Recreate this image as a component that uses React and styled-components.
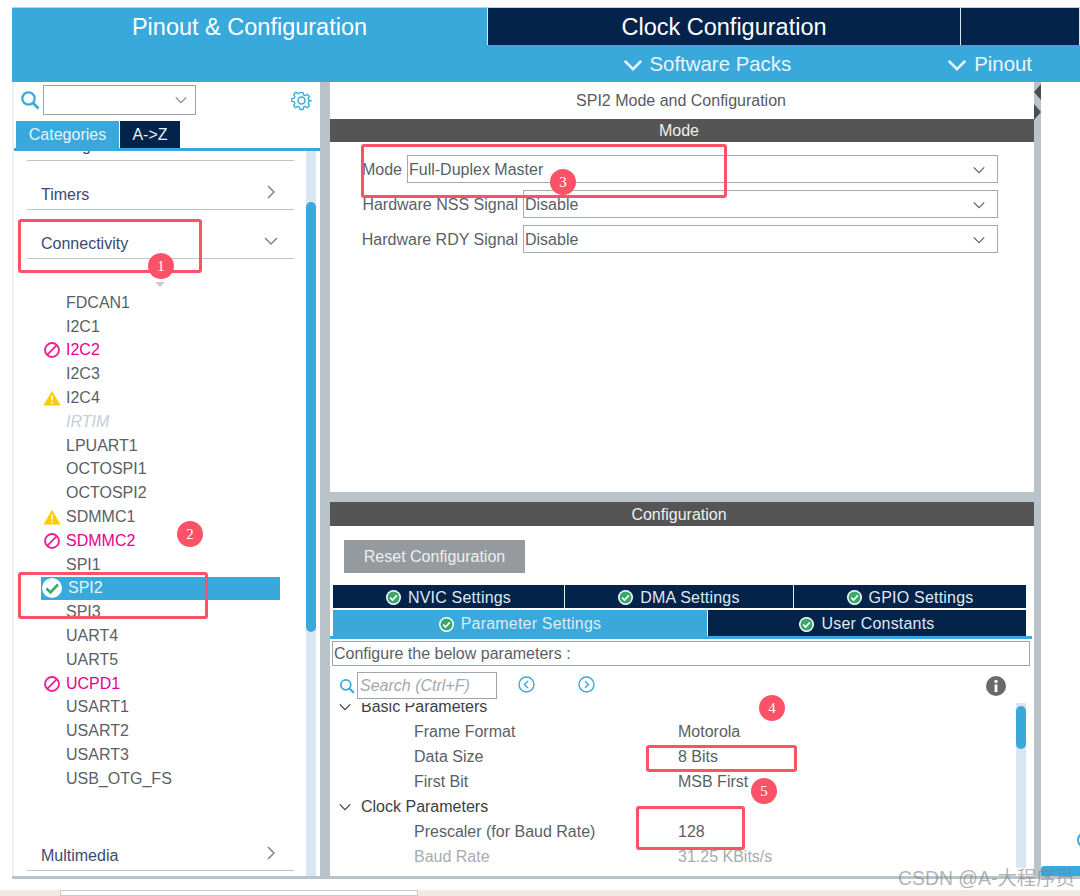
import React from "react";
import styled, { createGlobalStyle } from "styled-components";

const Global = createGlobalStyle`
  html, body { margin: 0; padding: 0; background: #fff; }
  body { font-family: "Liberation Sans", Arial, sans-serif; }
  * { box-sizing: border-box; }
`;

const Page = styled.div`
  position: relative;
  width: 1080px;
  height: 896px;
  overflow: hidden;
  background: #fff;
  display: flex;
  flex-direction: column;
  padding-top: 7px;
`;
const Shell = styled.div`
  margin-left: 12px;
  width: 1068px;
  height: 872px;
  flex: none;
  display: flex;
  flex-direction: column;
  border-bottom: 3px solid #b8c4ca;
`;
const TopTabs = styled.div`
  display: flex;
  height: 38px;
  flex: none;
  background: #03234b;
  border-top: 1px solid #a9d6ec;
`;
const TopTab = styled.div`
  width: ${(p) => p.$w}px;
  flex: none;
  display: flex;
  align-items: center;
  justify-content: center;
  padding-top: 1px;
  font-size: 23.5px;
  color: #fff;
  background: ${(p) => (p.$active ? "#39a9dc" : "#03234b")};
  border-right: 1px solid #d6e6ef;
`;
const SubBar = styled.div`
  height: 37px;
  flex: none;
  background: #39a9dc;
  display: flex;
  align-items: center;
  justify-content: flex-end;
  color: #e8f5fb;
  font-size: 20.4px;
  padding: 2px 48px 0 0;
  gap: 155px;
`;
const SubItem = styled.div`
  display: flex;
  align-items: center;
  gap: 6px;
`;
const Body = styled.div`
  flex: 1;
  min-height: 0;
  display: flex;
`;
const Side = styled.aside`
  width: 308px;
  flex: none;
  display: flex;
  flex-direction: column;
  padding-left: 2px;
  background: linear-gradient(90deg, #eef2f4 2px, #fff 2px);
`;
const SearchRow = styled.div`
  height: 39px;
  flex: none;
  display: flex;
  padding-top: 3px;
  align-items: flex-start;
`;
const SearchIcon = styled.div`
  width: 29px;
  height: 30px;
  flex: none;
  display: flex;
  align-items: center;
  justify-content: center;
  color: #39a9dc;
  padding-left: 2px;
`;
const Combo = styled.div`
  width: 153px;
  height: 30px;
  flex: none;
  border: 1px solid #9ba3a8;
  display: flex;
  align-items: center;
  justify-content: flex-end;
  padding-right: 7px;
  color: #7f8a90;
`;
const GearSlot = styled.div`
  margin-left: auto;
  width: 34px;
  height: 30px;
  flex: none;
  padding-right: 4px;
  display: flex;
  align-items: center;
  justify-content: center;
  color: #39a9dc;
`;
const SideTabs = styled.div`
  height: 27px;
  flex: none;
  display: flex;
  padding-left: 2px;
  gap: 1px;
`;
const SideTab = styled.div`
  width: ${(p) => p.$w}px;
  display: flex;
  align-items: center;
  justify-content: center;
  font-size: 16px;
  color: #e6f3fa;
  background: ${(p) => (p.$active ? "#39a9dc" : "#03234b")};
`;
const BlueRule = styled.div`
  height: 3px;
  flex: none;
  background: #39a9dc;
  margin-right: ${(p) => p.$mr || 0}px;
`;
const SideScroll = styled.div`
  flex: 1;
  min-height: 0;
  display: flex;
`;
const TreeView = styled.div`
  width: 292px;
  flex: none;
  overflow: hidden;
  padding: 0 12px 0 13px;
`;
const Track = styled.div`
  width: 10px;
  flex: none;
  background: #d9e7f4;
  display: flex;
  flex-direction: column;
`;
const Thumb = styled.div`
  flex: none;
  height: ${(p) => p.$h}px;
  margin-top: ${(p) => p.$top}px;
  background: #39a9dc;
  border-radius: 5px;
`;
const Category = styled.div`
  height: ${(p) => p.$h}px;
  margin-top: ${(p) => p.$mt || 0}px;
  border-bottom: 1px solid #bcc6d2;
  display: flex;
  align-items: flex-end;
  justify-content: space-between;
  padding: 0 15px 5px 14px;
  font-size: 16px;
  color: #3a4a72;
`;
const ChevronSlot = styled.div`
  color: #7f868b;
  display: flex;
  margin-bottom: 4px;
`;
const ScrollHint = styled.div`
  margin: 23px 0 0 128px;
  width: 0;
  height: 0;
  border-left: 5px solid transparent;
  border-right: 5px solid transparent;
  border-top: 5px solid #c9c9c9;
`;
const PeerList = styled.div`
  margin-top: 4px;
  display: flex;
  flex-direction: column;
  margin-left: 14px;
  width: 239px;
`;
const Peer = styled.div`
  height: 23.8px;
  flex: none;
  display: flex;
  align-items: center;
  font-size: 16px;
  color: ${(p) =>
    p.$selected ? "#e6f3fa" : p.$state === "off" ? "#e6008c" : p.$state === "dim" ? "#c6ced6" : "#5a5f66"};
  font-style: ${(p) => (p.$state === "dim" ? "italic" : "normal")};
  background: ${(p) => (p.$selected ? "#39a9dc" : "transparent")};
`;
const PeerIcon = styled.div`
  width: ${(p) => (p.$selected ? 27 : 25)}px;
  flex: none;
  display: flex;
  align-items: center;
  padding-left: ${(p) => (p.$selected ? 0 : 2)}px;
`;
const Gutter = styled.div`
  flex: none;
  width: ${(p) => p.$w}px;
  background: #b8c4ca;
  display: flex;
  flex-direction: column;
  align-items: center;
`;
const Center = styled.main`
  width: 704px;
  flex: none;
  display: flex;
  flex-direction: column;
`;
const ModePane = styled.section`
  height: 410px;
  flex: none;
  background: #fff;
`;
const PaneTitle = styled.div`
  height: 37px;
  display: flex;
  align-items: center;
  justify-content: center;
  font-size: 16px;
  color: #565c62;
  padding-right: 2px;
`;
const DarkBar = styled.div`
  height: ${(p) => p.$h}px;
  flex: none;
  background: #545554;
  color: #eef0ee;
  display: flex;
  align-items: center;
  justify-content: center;
  font-size: 16px;
  padding: 1px 6px 0 0;
`;
const ModeForm = styled.div`
  padding-top: 13px;
  display: flex;
  flex-direction: column;
  gap: 7px;
  width: 668px;
`;
const ModeRow = styled.div`
  display: flex;
  align-items: center;
  justify-content: flex-end;
  height: 28px;
  gap: 5px;
  font-size: 16px;
  color: #5a5f66;
`;
const ModeLabel = styled.div`
  white-space: nowrap;
  padding-top: 1px;
`;
const Select = styled.div`
  width: ${(p) => p.$w}px;
  height: 28px;
  flex: none;
  border: 1px solid #a4abaf;
  display: flex;
  align-items: center;
  justify-content: space-between;
  padding: 1px 11px 0 1px;
  color: #5a5f66;
`;
const SplitGap = styled.div`
  height: 10px;
  flex: none;
  background: #b8c4ca;
`;
const ConfigPane = styled.section`
  flex: 1;
  min-height: 0;
  display: flex;
  flex-direction: column;
  background: #fff;
  overflow: hidden;
`;
const ResetRow = styled.div`
  height: 59px;
  flex: none;
  padding: 14px 0 0 14px;
`;
const ResetButton = styled.div`
  width: 181px;
  height: 33px;
  background: #949a9e;
  color: #eef0f0;
  display: flex;
  align-items: center;
  justify-content: center;
  font-size: 16px;
`;
const TabRow = styled.div`
  display: flex;
  flex: none;
  height: ${(p) => p.$h}px;
  margin: 0 8px 0 3px;
  margin-top: ${(p) => p.$mt || 0}px;
`;
const ConfigTab = styled.div`
  flex: ${(p) => p.$w}px 0 0;
  display: flex;
  align-items: center;
  justify-content: center;
  gap: 7px;
  padding-top: 2px;
  font-size: 16px;
  letter-spacing: 0.2px;
  color: #dfeaf2;
  background: ${(p) => (p.$active ? "#39a9dc" : "#03234b")};
  border-right: ${(p) => (p.$last ? "none" : "1px solid #e3edf3")};
`;
const ConfigureBox = styled.div`
  margin: 2px 4px 0 2px;
  height: 25px;
  flex: none;
  border: 1px solid #9ea6ab;
  display: flex;
  align-items: center;
  padding: 1px 0 0 1px;
  font-size: 16px;
  color: #5a5f66;
`;
const ParamTools = styled.div`
  height: 37px;
  flex: none;
  margin-right: 4px;
  padding: 6px 24px 0 9px;
  display: flex;
  align-items: flex-start;
  color: #39a9dc;
`;
const ToolIcon = styled.div`
  display: flex;
  flex: none;
  margin-top: 6px;
`;
const ToolSearch = styled.div`
  width: 140px;
  height: 27px;
  margin-left: 2px;
  flex: none;
  border: 1px solid #9ea6ab;
  display: flex;
  align-items: center;
  padding: 1px 0 0 2px;
  font-size: 16px;
  font-style: italic;
  color: #a4a9ad;
`;
const NavDot = styled.div`
  flex: none;
  margin-left: ${(p) => p.$ml}px;
  margin-top: 4px;
  display: flex;
`;
const InfoDot = styled.div`
  flex: none;
  margin-left: auto;
  margin-top: 4px;
  display: flex;
  color: #6a6a6a;
`;
const ParamBody = styled.div`
  flex: 1;
  min-height: 0;
  display: flex;
  padding-left: 4px;
  padding-right: 8px;
`;
const ParamScroll = styled.div`
  flex: 1;
  min-width: 0;
  overflow: hidden;
`;
const ParamList = styled.div`
  margin-top: -9px;
  display: flex;
  flex-direction: column;
`;
const ParamRow = styled.div`
  height: 25px;
  flex: none;
  display: flex;
  align-items: center;
  font-size: 16px;
  color: ${(p) => (p.$dim ? "#a7acb0" : "#5a5f66")};
`;
const GroupRow = styled(ParamRow)`
  color: #3c4046;
  gap: 9px;
  padding-left: 4px;
`;
const ParamName = styled.div`
  width: 264px;
  margin-left: 80px;
  flex: none;
`;
const ParamTrack = styled(Track)`
  margin-bottom: 8px;
`;
const RightRail = styled.div`
  flex: 1;
  min-width: 0;
  background: #fff;
  display: flex;
  flex-direction: column;
  justify-content: flex-end;
`;
const BottomTab = styled.div`
  height: 10px;
  background: #39a9dc;
  border-top-left-radius: 3px;
  margin-top: auto;
`;
const Footer = styled.div`
  flex: 1;
  margin-top: 11px;
  background: #efe9e2;
  padding-left: 60px;
`;
const FooterBox = styled.div`
  width: 358px;
  height: 100%;
  background: #fff;
  border: 1px solid #c9c9c9;
`;
const RedBox = styled.div`
  position: absolute;
  left: ${(p) => p.$x}px;
  top: ${(p) => p.$y}px;
  width: ${(p) => p.$w}px;
  height: ${(p) => p.$h}px;
  border: 3px solid #fb5268;
  border-radius: 3px;
`;
const Badge = styled.div`
  position: absolute;
  left: ${(p) => p.$x - 13}px;
  top: ${(p) => p.$y - 13}px;
  width: 26px;
  height: 26px;
  border-radius: 50%;
  background: #fb5268;
  color: #fff;
  font-family: "Liberation Serif", serif;
  font-size: 15px;
  display: flex;
  align-items: center;
  justify-content: center;
`;
const Watermark = styled.div`
  position: absolute;
  left: 898px;
  top: 866px;
  font-family: "Liberation Sans", "Noto Sans CJK SC", sans-serif;
  font-size: 19.4px;
  line-height: 24px;
  white-space: nowrap;
  color: rgba(130, 130, 130, 0.62);
`;
const ArrowLeft = styled.div`
  margin-top: 2px;
  width: 0;
  height: 0;
  border-top: 8px solid transparent;
  border-bottom: 8px solid transparent;
  border-right: 7px solid #4c4c4c;
`;
const ArrowRight = styled.div`
  margin-top: 4px;
  width: 0;
  height: 0;
  border-top: 8px solid transparent;
  border-bottom: 8px solid transparent;
  border-left: 7px solid #4c4c4c;
`;
const EdgeDot = styled.div`
  position: absolute;
  left: 1077px;
  top: 832px;
  width: 16px;
  height: 16px;
  border-radius: 50%;
  border: 2px solid #39a9dc;
`;

const Chevron = ({ size = 16, dir = "down", w = 1.5 }) => (
  <svg width={size} height={size} viewBox="0 0 16 16" fill="none" stroke="currentColor" strokeWidth={w}>
    {dir === "down" ? <path d="M2 5l6 6 6-6" /> : <path d="M5 2l6 6-6 6" />}
  </svg>
);
const Search = ({ size = 20 }) => (
  <svg width={size} height={size} viewBox="0 0 20 20" fill="none" stroke="currentColor" strokeWidth="2.2">
    <circle cx="8.5" cy="8.5" r="6.2" />
    <path d="M13 13l5.5 5.5" strokeWidth="2.6" />
  </svg>
);
const Gear = () => (
  <svg width="21" height="21" viewBox="0 0 24 24" fill="none" stroke="currentColor" strokeWidth="1.7" strokeLinejoin="round">
    <path d="M10 2h4l.6 3 2.1.9 2.6-1.7 2.8 2.8-1.7 2.6.9 2.1 3 .6v0l-3 .6v0.8l-.9 2.1 1.7 2.6-2.8 2.8-2.6-1.7-2.1.9-.6 3h-4l-.6-3-2.1-.9-2.6 1.7-2.8-2.8 1.7-2.6-.9-2.1-3-.6v-3.4l3-.6.9-2.1-1.7-2.6 2.8-2.8 2.6 1.7 2.1-.9z" transform="translate(1.2 1.2) scale(0.9)" />
    <circle cx="12" cy="12" r="4" />
  </svg>
);
const Ban = () => (
  <svg width="18" height="18" viewBox="0 0 18 18" fill="none" stroke="#e8268f" strokeWidth="1.9">
    <circle cx="9" cy="9" r="7" />
    <path d="M4.2 13.8l9.6-9.6" />
  </svg>
);
const Warn = () => (
  <svg width="18" height="16" viewBox="0 0 18 16">
    <path d="M9 .8L17.6 15.4H.4z" fill="#fecb00" />
    <path d="M9 5.5v5M9 11.8v1.6" stroke="#fff" strokeWidth="1.6" />
  </svg>
);
const CheckBig = () => (
  <svg width="22" height="22" viewBox="0 0 22 22">
    <circle cx="11" cy="11" r="10" fill="#fff" />
    <path d="M5.5 11.5l4 4 7.5-8" fill="none" stroke="#3aa76d" strokeWidth="2.6" />
  </svg>
);
const CheckSmall = () => (
  <svg width="15" height="15" viewBox="0 0 15 15">
    <circle cx="7.5" cy="7.5" r="7.5" fill="#fff" />
    <circle cx="7.5" cy="7.5" r="6" fill="#3aa76d" />
    <path d="M4.2 7.6l2.4 2.4 4.2-4.6" fill="none" stroke="#fff" strokeWidth="1.7" />
  </svg>
);
const Nav = ({ right }) => (
  <svg width="17" height="17" viewBox="0 0 17 17" fill="none" stroke="#39a9dc">
    <circle cx="8.5" cy="8.5" r="7.5" strokeWidth="1.4" />
    <path d={right ? "M7 5l3.5 3.5L7 12" : "M10 5L6.5 8.5 10 12"} strokeWidth="1.4" />
  </svg>
);
const Info = () => (
  <svg width="20" height="20" viewBox="0 0 20 20">
    <circle cx="10" cy="10" r="10" fill="currentColor" />
    <rect x="8.6" y="8.5" width="2.8" height="7.5" fill="#fff" />
    <circle cx="10" cy="5.5" r="1.7" fill="#fff" />
  </svg>
);

const peers = [
  ["FDCAN1"], ["I2C1"], ["I2C2", "off"], ["I2C3"], ["I2C4", "warn"], ["IRTIM", "dim"],
  ["LPUART1"], ["OCTOSPI1"], ["OCTOSPI2"], ["SDMMC1", "warn"], ["SDMMC2", "off"], ["SPI1"],
  ["SPI2", "ok"], ["SPI3"], ["UART4"], ["UART5"], ["UCPD1", "off"], ["USART1"], ["USART2"],
  ["USART3"], ["USB_OTG_FS"],
];

const params = [
  ["Frame Format", "Motorola"],
  ["Data Size", "8 Bits"],
  ["First Bit", "MSB First"],
];

const redBoxes = [
  [18, 219, 184, 54],
  [18, 572, 190, 47],
  [361, 144, 366, 54],
  [646, 745, 151, 27],
  [636, 806, 109, 44],
];
const badges = [
  [161, 266, 1],
  [190, 534, 2],
  [563, 182, 3],
  [772, 708, 4],
  [764, 791, 5],
];

export default function App() {
  return (
    <Page>
      <Global />
      <Shell>
        <TopTabs>
          <TopTab $w={476} $active>Pinout &amp; Configuration</TopTab>
          <TopTab $w={473}>Clock Configuration</TopTab>
          <TopTab $w={119} />
        </TopTabs>
        <SubBar>
          <SubItem><Chevron size={22} w={2} />Software Packs</SubItem>
          <SubItem><Chevron size={22} w={2} />Pinout</SubItem>
        </SubBar>
        <Body>
          <Side>
            <SearchRow>
              <SearchIcon><Search /></SearchIcon>
              <Combo><Chevron size={14} /></Combo>
              <GearSlot><Gear /></GearSlot>
            </SearchRow>
            <SideTabs>
              <SideTab $w={103} $active>Categories</SideTab>
              <SideTab $w={60}>A-&gt;Z</SideTab>
            </SideTabs>
            <BlueRule />
            <SideScroll>
              <TreeView>
                <Category $h={10}>Analog</Category>
                <Category $h={49}>
                  Timers
                  <ChevronSlot><Chevron dir="right" /></ChevronSlot>
                </Category>
                <Category $h={49}>
                  Connectivity
                  <ChevronSlot><Chevron /></ChevronSlot>
                </Category>
                <ScrollHint />
                <PeerList>
                  {peers.map(([name, state]) => (
                    <Peer key={name} $state={state} $selected={state === "ok"}>
                      <PeerIcon $selected={state === "ok"}>
                        {state === "off" && <Ban />}
                        {state === "warn" && <Warn />}
                        {state === "ok" && <CheckBig />}
                      </PeerIcon>
                      {name}
                    </Peer>
                  ))}
                </PeerList>
                <Category $h={50} $mt={30}>
                  Multimedia
                  <ChevronSlot><Chevron dir="right" /></ChevronSlot>
                </Category>
              </TreeView>
              <Track><Thumb $top={51} $h={430} /></Track>
            </SideScroll>
          </Side>
          <Gutter $w={10} />
          <Center>
            <ModePane>
              <PaneTitle>SPI2 Mode and Configuration</PaneTitle>
              <DarkBar $h={23}>Mode</DarkBar>
              <ModeForm>
                <ModeRow>
                  <ModeLabel>Mode</ModeLabel>
                  <Select $w={591}>Full-Duplex Master<Chevron size={14} w={1.3} /></Select>
                </ModeRow>
                <ModeRow>
                  <ModeLabel>Hardware NSS Signal</ModeLabel>
                  <Select $w={475}>Disable<Chevron size={14} w={1.3} /></Select>
                </ModeRow>
                <ModeRow>
                  <ModeLabel>Hardware RDY Signal</ModeLabel>
                  <Select $w={475}>Disable<Chevron size={14} w={1.3} /></Select>
                </ModeRow>
              </ModeForm>
            </ModePane>
            <SplitGap />
            <ConfigPane>
              <DarkBar $h={24}>Configuration</DarkBar>
              <ResetRow><ResetButton>Reset Configuration</ResetButton></ResetRow>
              <TabRow $h={23}>
                <ConfigTab $w={232}><CheckSmall />NVIC Settings</ConfigTab>
                <ConfigTab $w={229}><CheckSmall />DMA Settings</ConfigTab>
                <ConfigTab $w={232} $last><CheckSmall />GPIO Settings</ConfigTab>
              </TabRow>
              <TabRow $h={26} $mt={2}>
                <ConfigTab $w={375} $active><CheckSmall />Parameter Settings</ConfigTab>
                <ConfigTab $w={318} $last><CheckSmall />User Constants</ConfigTab>
              </TabRow>
              <BlueRule $mr={2} />
              <ConfigureBox>Configure the below parameters :</ConfigureBox>
              <ParamTools>
                <ToolIcon><Search size={16} /></ToolIcon>
                <ToolSearch>Search (Ctrl+F)</ToolSearch>
                <NavDot $ml={21}><Nav /></NavDot>
                <NavDot $ml={43}><Nav right /></NavDot>
                <InfoDot><Info /></InfoDot>
              </ParamTools>
              <ParamBody>
                <ParamScroll>
                  <ParamList>
                    <GroupRow><Chevron size={14} w={1.4} />Basic Parameters</GroupRow>
                    {params.map(([a, b]) => (
                      <ParamRow key={a}><ParamName>{a}</ParamName>{b}</ParamRow>
                    ))}
                    <GroupRow><Chevron size={14} w={1.4} />Clock Parameters</GroupRow>
                    <ParamRow><ParamName>Prescaler (for Baud Rate)</ParamName>128</ParamRow>
                    <ParamRow $dim><ParamName>Baud Rate</ParamName>31.25 KBits/s</ParamRow>
                  </ParamList>
                </ParamScroll>
                <ParamTrack><Thumb $top={3} $h={43} /></ParamTrack>
              </ParamBody>
            </ConfigPane>
          </Center>
          <Gutter $w={7}><ArrowLeft /><ArrowRight /></Gutter>
          <RightRail><BottomTab /></RightRail>
        </Body>
      </Shell>
      <Footer><FooterBox /></Footer>
      {redBoxes.map(([x, y, w, h]) => (
        <RedBox key={`${x}-${y}`} $x={x} $y={y} $w={w} $h={h} />
      ))}
      {badges.map(([x, y, n]) => (
        <Badge key={n} $x={x} $y={y}>{n}</Badge>
      ))}
      <EdgeDot />
      <Watermark>CSDN @A-大程序员</Watermark>
    </Page>
  );
}
